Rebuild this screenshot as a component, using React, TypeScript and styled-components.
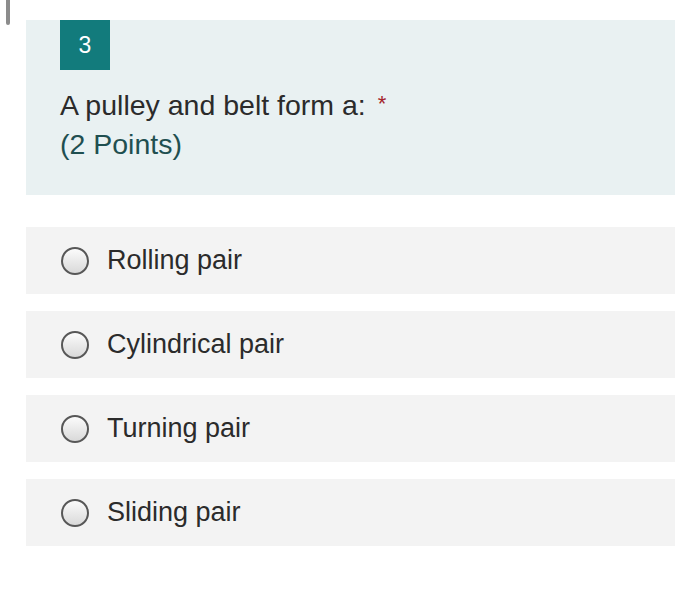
import styled, { createGlobalStyle } from "styled-components";

const options = ["Rolling pair", "Cylindrical pair", "Turning pair", "Sliding pair"];

const App = () => {
  return (
    <>
      <GlobalStyle />
      <Page>
        <ScrollMark />
        <QuestionCard>
          <Badge>3</Badge>
          <Title>
            A pulley and belt form a:<Required>*</Required>
          </Title>
          <Points>(2 Points)</Points>
        </QuestionCard>
        <OptionList>
          {options.map((label) => (
            <Option key={label}>
              <Radio />
              <OptionLabel>{label}</OptionLabel>
            </Option>
          ))}
        </OptionList>
      </Page>
    </>
  );
};

export default App;

const GlobalStyle = createGlobalStyle`
  body {
    margin: 0;
    background: #fff;
    font-family: "Liberation Sans", Arial, sans-serif;
  }
`;

const Page = styled.div`
  position: relative;
  padding: 20px 25px 40px 26px;
`;

const ScrollMark = styled.div`
  position: absolute;
  left: 6px;
  top: 0;
  width: 4px;
  height: 25px;
  background: #8c8c8c;
  border-radius: 0 0 2px 2px;
`;

const QuestionCard = styled.div`
  background: #e9f1f2;
  height: 175px;
  box-sizing: border-box;
  padding: 0 34px;
`;

const Badge = styled.div`
  width: 50px;
  height: 50px;
  background: #127b7c;
  color: #fff;
  font-size: 23px;
  display: flex;
  align-items: center;
  justify-content: center;
  margin-bottom: 15px;
`;

const Title = styled.div`
  font-size: 28.5px;
  line-height: 40px;
  color: #2b2b2b;
`;

const Required = styled.span`
  color: #a4262c;
  font-size: 22px;
  line-height: 0;
  margin-left: 12px;
  position: relative;
  top: -4px;
`;

const Points = styled.div`
  font-size: 28.5px;
  line-height: 39px;
  color: #1f4f50;
`;

const OptionList = styled.div`
  display: flex;
  flex-direction: column;
  gap: 17px;
  margin-top: 32px;
`;

const Option = styled.div`
  background: #f3f3f3;
  height: 67px;
  display: flex;
  align-items: center;
  padding-left: 35px;
  gap: 18px;
`;

const Radio = styled.span`
  width: 28px;
  height: 28px;
  box-sizing: border-box;
  border-radius: 50%;
  border: 2px solid #575757;
  background: linear-gradient(#fbfbfb, #d9d9d9);
  flex-shrink: 0;
`;

const OptionLabel = styled.span`
  font-size: 27px;
  color: #2b2b2b;
`;
